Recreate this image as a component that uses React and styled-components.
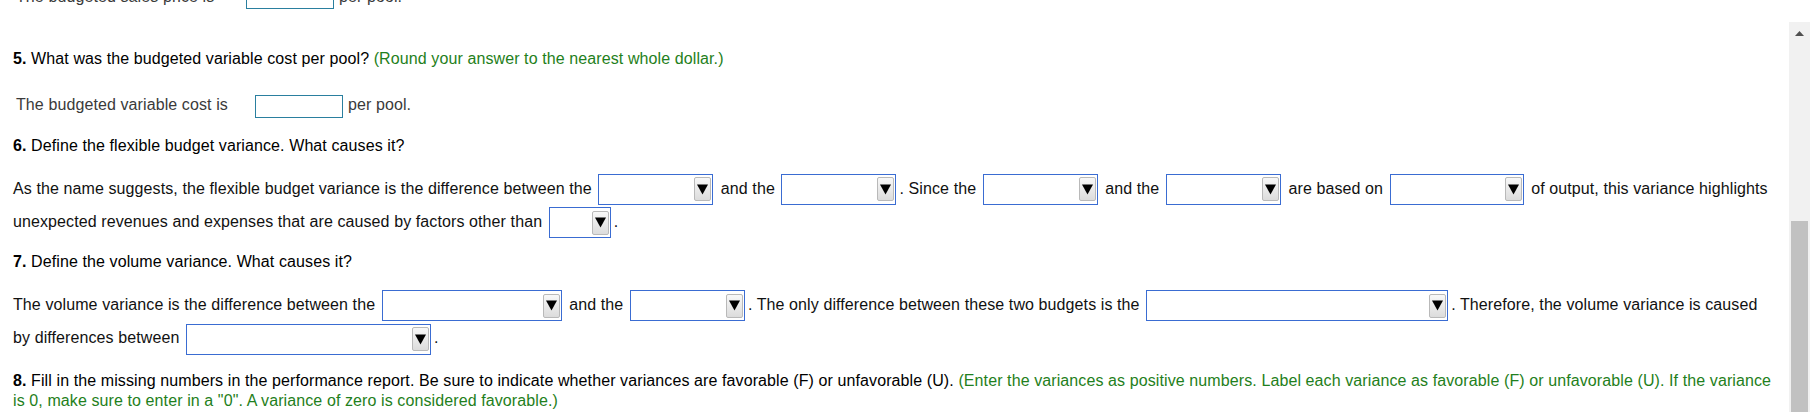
import React from "react";
import styled, { createGlobalStyle } from "styled-components";

const GlobalStyle = createGlobalStyle`
  body {
    margin: 0;
    background: #fff;
    font-family: "Liberation Sans", Arial, sans-serif;
    font-size: 16px;
    letter-spacing: 0.1px;
  }
`;

const Page = styled.div`
  display: flex;
  height: 412px;
  overflow: hidden;
`;

const Content = styled.div`
  flex: 1;
  min-width: 0;
  padding: 0 11px 0 13px;
  margin-top: -15px;
`;

const Scrollbar = styled.div`
  width: 21px;
  margin: 22px 5px 0 0;
  background: #f1f1f1;
  display: flex;
  flex-direction: column;
  align-items: center;
  flex-shrink: 0;
`;

const ArrowUp = styled.svg`
  margin-top: 9px;
`;

const Thumb = styled.div`
  width: 17px;
  height: 191px;
  margin-top: auto;
  background: #c1c1c1;
  flex-shrink: 0;
`;

const AnswerRow = styled.div`
  margin-top: ${(p) => p.$mt || 0}px;
  padding-left: 3px;
  line-height: 24px;
  color: #3a3a3a;
  white-space: nowrap;
`;

const Label = styled.span`
  display: inline-block;
  width: ${(p) => p.$w}px;
`;

const AnswerBox = styled.span`
  display: inline-block;
  width: 88px;
  height: 23px;
  box-sizing: border-box;
  border: 1px solid #2a7f9f;
  vertical-align: middle;
  margin-right: 5px;
`;

const Heading = styled.p`
  margin: ${(p) => p.$mt}px 0 0;
  line-height: 20px;
  color: #000;
`;

const Hint = styled.span`
  color: #1f8020;
`;

const Sentence = styled.p`
  margin: ${(p) => p.$mt}px 0 0;
  line-height: 33px;
  color: #111;
`;

const Dropdown = styled.span`
  display: inline-flex;
  justify-content: flex-end;
  align-items: center;
  width: ${(p) => p.$w}px;
  height: 31px;
  box-sizing: border-box;
  border: 1px solid #3a6cd2;
  background: #fff;
  padding: 0 1px;
  margin: 0 3px 0 2px;
  vertical-align: middle;
`;

const DropButton = styled.span`
  width: 17px;
  height: 24px;
  box-sizing: border-box;
  border: 1px solid #b9b9b9;
  border-radius: 2px;
  background: linear-gradient(#f8f8f8, #dcdcdc);
  display: flex;
  align-items: center;
  justify-content: center;
`;

const Select = ({ w }) => (
  <Dropdown $w={w}>
    <DropButton>
      <svg width="11" height="11" viewBox="0 0 11 11">
        <polygon points="0,0.5 11,0.5 5.5,10.5" fill="#000" />
      </svg>
    </DropButton>
  </Dropdown>
);

export default function App() {
  return (
    <>
      <GlobalStyle />
      <Page>
        <Content>
          <AnswerRow>
            <Label $w={230}>The budgeted sales price is</Label>
            <AnswerBox />
            per pool.
          </AnswerRow>

          <Heading $mt={40}>
            <b>5.</b> What was the budgeted variable cost per pool?{" "}
            <Hint>(Round your answer to the nearest whole dollar.)</Hint>
          </Heading>

          <AnswerRow $mt={24}>
            <Label $w={239}>The budgeted variable cost is</Label>
            <AnswerBox />
            per pool.
          </AnswerRow>

          <Heading $mt={18}>
            <b>6.</b> Define the flexible budget variance. What causes it?
          </Heading>

          <Sentence $mt={16}>
            As the name suggests, the flexible budget variance is the difference between the{" "}
            <Select w={115} /> and the <Select w={115} />. Since the{" "}
            <Select w={115} /> and the <Select w={115} /> are based on{" "}
            <Select w={134} /> of output, this variance highlights unexpected revenues and
            expenses that are caused by factors other than <Select w={62} />.
          </Sentence>

          <Heading $mt={14}>
            <b>7.</b> Define the volume variance. What causes it?
          </Heading>

          <Sentence $mt={16}>
            The volume variance is the difference between the <Select w={180} /> and the{" "}
            <Select w={115} />. The only difference between these two budgets is the{" "}
            <Select w={302} />. Therefore, the volume variance is caused by differences
            between <Select w={245} />.
          </Sentence>

          <Heading $mt={16}>
            <b>8.</b> Fill in the missing numbers in the performance report. Be sure to
            indicate whether variances are favorable (F) or unfavorable (U).{" "}
            <Hint>
              (Enter the variances as positive numbers. Label each variance as favorable (F)
              or unfavorable (U). If the variance is 0, make sure to enter in a "0". A
              variance of zero is considered favorable.)
            </Hint>
          </Heading>
        </Content>

        <Scrollbar>
          <ArrowUp width="9" height="5" viewBox="0 0 9 5">
            <polygon points="0,5 9,5 4.5,0" fill="#505050" />
          </ArrowUp>
          <Thumb />
        </Scrollbar>
      </Page>
    </>
  );
}
